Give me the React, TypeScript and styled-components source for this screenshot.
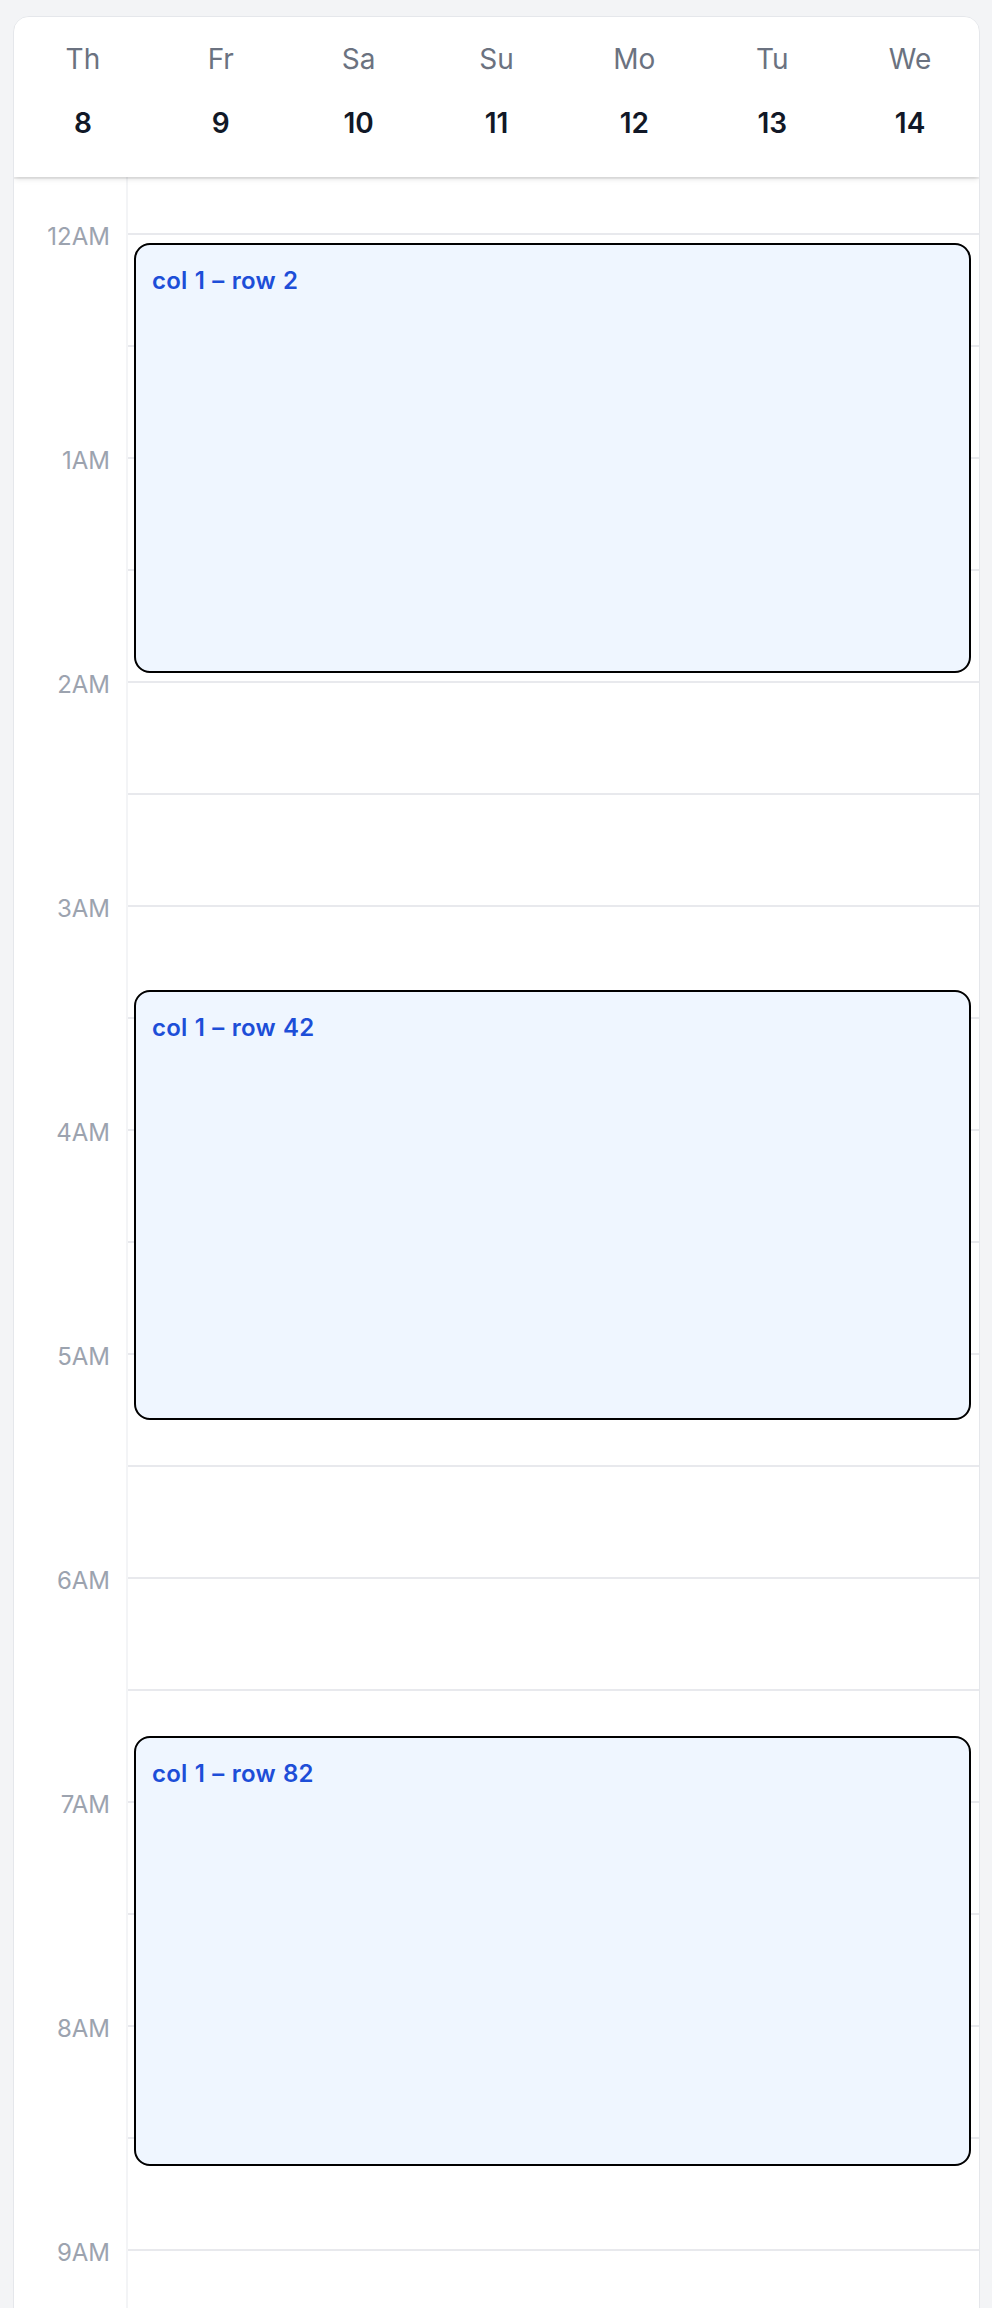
import React from "react";
import styled, { createGlobalStyle } from "styled-components";

type CalendarEvent = {
  id: string;
  col: number;
  row: number;
  span: number;
};

const days = [
  { name: "Th", date: 8 },
  { name: "Fr", date: 9 },
  { name: "Sa", date: 10 },
  { name: "Su", date: 11 },
  { name: "Mo", date: 12 },
  { name: "Tu", date: 13 },
  { name: "We", date: 14 },
];

const hours = Array.from({ length: 24 }, (_, i) => {
  const h = i % 12 === 0 ? 12 : i % 12;
  return `${h}${i < 12 ? "AM" : "PM"}`;
});

// 288 five-minute rows; row 2 is midnight
const events: CalendarEvent[] = [
  { id: "a", col: 1, row: 2, span: 24 },
  { id: "b", col: 1, row: 42, span: 24 },
  { id: "c", col: 1, row: 82, span: 24 },
];

const App = () => {
  return (
    <>
      <GlobalStyle />
      <Page>
        <Calendar>
          <WeekHeader>
            {days.map((day) => (
              <DayCell key={day.date}>
                <DayName>{day.name}</DayName>
                <DayNumber>{day.date}</DayNumber>
              </DayCell>
            ))}
          </WeekHeader>
          <TimeBody>
            <Gutter>
              <GutterSpacer />
              {hours.map((label) => (
                <HourSlot key={label}>
                  <TimeLabel>{label}</TimeLabel>
                </HourSlot>
              ))}
            </Gutter>
            <DayArea>
              <Lines>
                <LineSpacer />
                {Array.from({ length: 48 }, (_, i) => (
                  <HalfHourLine key={i} />
                ))}
              </Lines>
              <EventList>
                {events.map((ev) => (
                  <EventItem
                    key={ev.id}
                    style={{ gridRow: `${ev.row} / span ${ev.span}` }}
                  >
                    <EventCard href="#">
                      <EventTitle>
                        col {ev.col} – row {ev.row}
                      </EventTitle>
                    </EventCard>
                  </EventItem>
                ))}
              </EventList>
            </DayArea>
          </TimeBody>
        </Calendar>
      </Page>
    </>
  );
};

export default App;

const GlobalStyle = createGlobalStyle`
  html, body {
    margin: 0;
    padding: 0;
    background: #f3f4f6;
    font-family: Inter, "Noto Sans", "Liberation Sans", sans-serif;
    overflow: hidden;
  }
  * {
    box-sizing: border-box;
  }
`;

const Page = styled.div`
  height: 100vh;
  overflow: hidden;
  padding: 16px 12px 0 13px;
`;

const Calendar = styled.div`
  background: #fff;
  border: 1px solid #e5e7eb;
  border-radius: 16px;
  overflow: hidden;
  display: flex;
  flex-direction: column;
`;

const WeekHeader = styled.div`
  position: relative;
  z-index: 3;
  display: grid;
  grid-template-columns: repeat(7, minmax(0, 1fr));
  background: #fff;
  box-shadow: 0 2px 6px 0 rgba(0, 0, 0, 0.1), 0 2px 4px -2px rgba(0, 0, 0, 0.1),
    0 0 0 2px rgba(0, 0, 0, 0.05);
`;

const DayCell = styled.div`
  display: flex;
  flex-direction: column;
  align-items: center;
  padding: 18px 0 22px;
`;

const DayName = styled.span`
  font-size: 28px;
  line-height: 48px;
  color: #6b7280;
`;

const DayNumber = styled.span`
  margin-top: 8px;
  height: 64px;
  display: flex;
  align-items: center;
  justify-content: center;
  font-size: 28px;
  font-weight: 600;
  color: #111827;
`;

const TimeBody = styled.div`
  display: flex;
`;

const Gutter = styled.div`
  position: relative;
  z-index: 2;
  flex: none;
  width: 112px;
  background: #fff;
  box-shadow: 0 0 0 2px #f3f4f6;
  display: grid;
  grid-template-rows: 56px repeat(24, 224px);
`;

const GutterSpacer = styled.div``;

const HourSlot = styled.div``;

const TimeLabel = styled.div`
  margin-top: -16px;
  padding-right: 16px;
  text-align: right;
  font-size: 24px;
  line-height: 40px;
  color: #9ca3af;
`;

const DayArea = styled.div`
  flex: 1;
  display: grid;
  grid-template-columns: minmax(0, 1fr);
  grid-template-rows: auto;
`;

const Lines = styled.div`
  grid-area: 1 / 1;
  display: grid;
  grid-template-rows: 56px repeat(48, 112px);
`;

const LineSpacer = styled.div``;

const HalfHourLine = styled.div`
  border-top: 2px solid #e8e9ed;
`;

const EventList = styled.ol`
  grid-area: 1 / 1;
  list-style: none;
  margin: 0;
  padding: 0;
  display: grid;
  grid-template-columns: minmax(0, 1fr);
  grid-template-rows: 56px repeat(288, minmax(0, 1fr)) auto;
`;

const EventItem = styled.li`
  grid-column: 1;
  display: flex;
  min-height: 0;
  margin-top: 2px;
  padding: 8px;
`;

const EventCard = styled.a`
  flex: 1;
  display: flex;
  flex-direction: column;
  padding: 16px;
  background: #eff6ff;
  border: 2px solid #000;
  border-radius: 16px;
  text-decoration: none;
  overflow: hidden;
`;

const EventTitle = styled.p`
  margin: 0;
  font-size: 24px;
  line-height: 40px;
  font-weight: 600;
  letter-spacing: 0.2px;
  word-spacing: 1px;
  color: #1d4ed8;
`;
